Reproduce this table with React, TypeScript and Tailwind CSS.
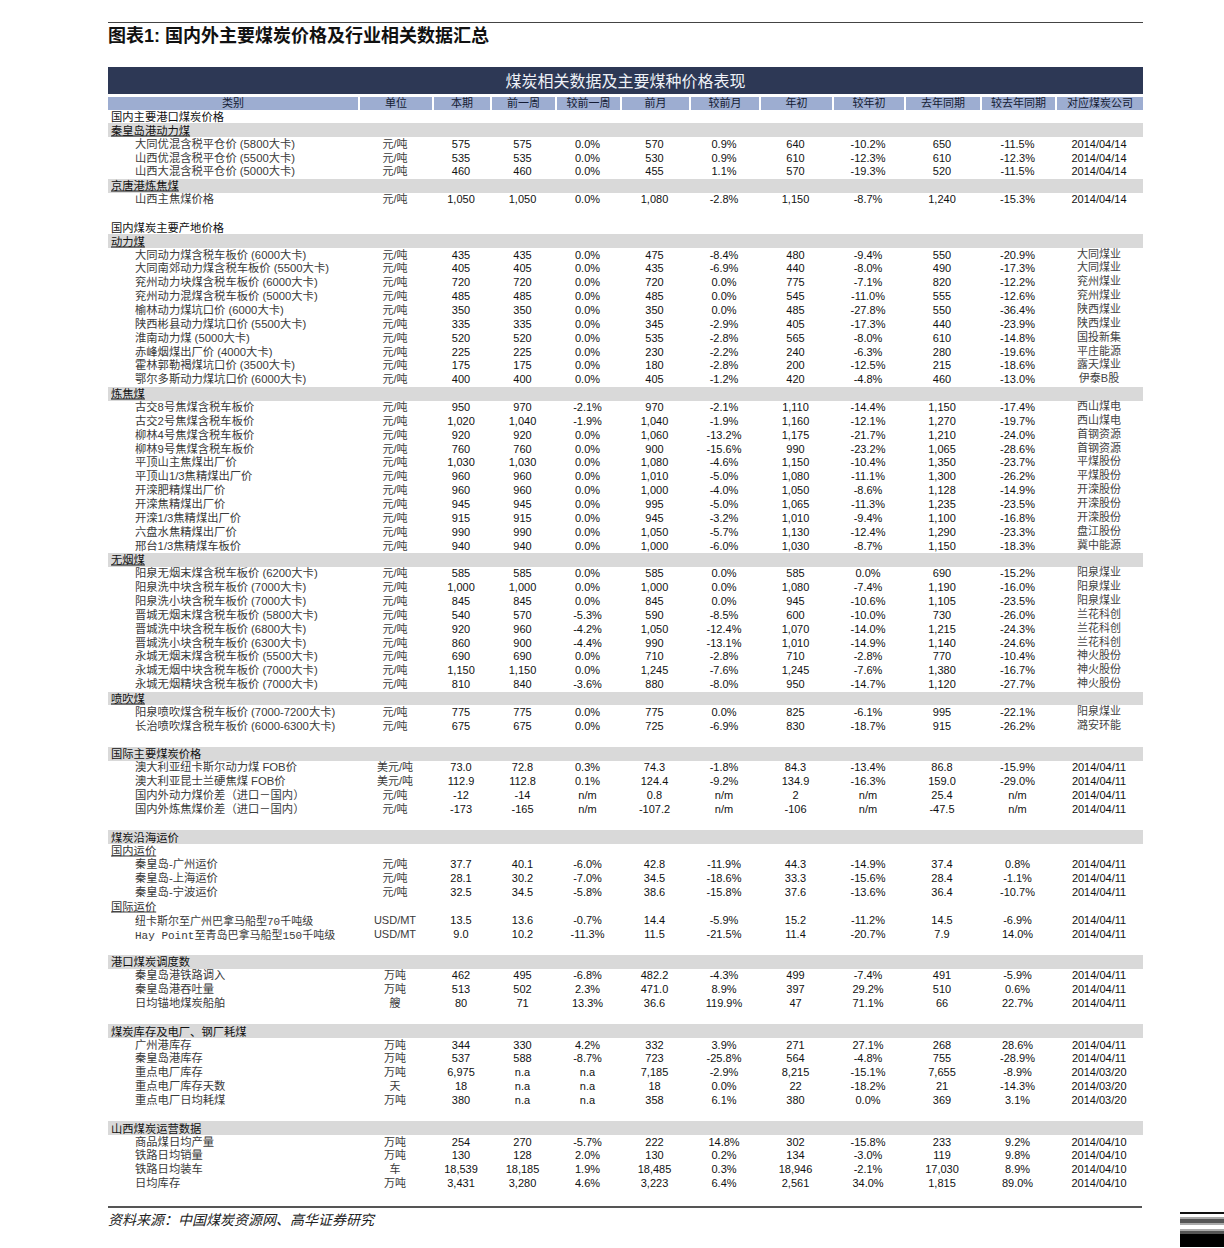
const COLS =
  'grid grid-cols-[250px_74px_58px_65px_65px_69px_70px_73px_72px_76px_75px_88px]';

const HEAD = ['类别', '单位', '本期', '前一周', '较前一周', '前月', '较前月', '年初', '较年初', '去年同期', '较去年同期', '对应煤炭公司'];

// "!h" plain header, "!g" grey band, "!gu" grey band underlined, "!u" underlined, "!b" blank
const DATA: string[] = [
  '!h 国内主要港口煤炭价格',
  '!gu 秦皇岛港动力煤',
  '大同优混含税平仓价 (5800大卡)|元/吨|575|575|0.0%|570|0.9%|640|-10.2%|650|-11.5%|2014/04/14',
  '山西优混含税平仓价 (5500大卡)|元/吨|535|535|0.0%|530|0.9%|610|-12.3%|610|-12.3%|2014/04/14',
  '山西大混含税平仓价 (5000大卡)|元/吨|460|460|0.0%|455|1.1%|570|-19.3%|520|-11.5%|2014/04/14',
  '!gu 京唐港炼焦煤',
  '山西主焦煤价格|元/吨|1,050|1,050|0.0%|1,080|-2.8%|1,150|-8.7%|1,240|-15.3%|2014/04/14',
  '!b',
  '!h 国内煤炭主要产地价格',
  '!gu 动力煤',
  '大同动力煤含税车板价 (6000大卡)|元/吨|435|435|0.0%|475|-8.4%|480|-9.4%|550|-20.9%|大同煤业',
  '大同南郊动力煤含税车板价 (5500大卡)|元/吨|405|405|0.0%|435|-6.9%|440|-8.0%|490|-17.3%|大同煤业',
  '兖州动力块煤含税车板价 (6000大卡)|元/吨|720|720|0.0%|720|0.0%|775|-7.1%|820|-12.2%|兖州煤业',
  '兖州动力混煤含税车板价 (5000大卡)|元/吨|485|485|0.0%|485|0.0%|545|-11.0%|555|-12.6%|兖州煤业',
  '榆林动力煤坑口价 (6000大卡)|元/吨|350|350|0.0%|350|0.0%|485|-27.8%|550|-36.4%|陕西煤业',
  '陕西彬县动力煤坑口价 (5500大卡)|元/吨|335|335|0.0%|345|-2.9%|405|-17.3%|440|-23.9%|陕西煤业',
  '淮南动力煤 (5000大卡)|元/吨|520|520|0.0%|535|-2.8%|565|-8.0%|610|-14.8%|国投新集',
  '赤峰烟煤出厂价 (4000大卡)|元/吨|225|225|0.0%|230|-2.2%|240|-6.3%|280|-19.6%|平庄能源',
  '霍林郭勒褐煤坑口价 (3500大卡)|元/吨|175|175|0.0%|180|-2.8%|200|-12.5%|215|-18.6%|露天煤业',
  '鄂尔多斯动力煤坑口价 (6000大卡)|元/吨|400|400|0.0%|405|-1.2%|420|-4.8%|460|-13.0%|伊泰B股',
  '!gu 炼焦煤',
  '古交8号焦煤含税车板价|元/吨|950|970|-2.1%|970|-2.1%|1,110|-14.4%|1,150|-17.4%|西山煤电',
  '古交2号焦煤含税车板价|元/吨|1,020|1,040|-1.9%|1,040|-1.9%|1,160|-12.1%|1,270|-19.7%|西山煤电',
  '柳林4号焦煤含税车板价|元/吨|920|920|0.0%|1,060|-13.2%|1,175|-21.7%|1,210|-24.0%|首钢资源',
  '柳林9号焦煤含税车板价|元/吨|760|760|0.0%|900|-15.6%|990|-23.2%|1,065|-28.6%|首钢资源',
  '平顶山主焦煤出厂价|元/吨|1,030|1,030|0.0%|1,080|-4.6%|1,150|-10.4%|1,350|-23.7%|平煤股份',
  '平顶山1/3焦精煤出厂价|元/吨|960|960|0.0%|1,010|-5.0%|1,080|-11.1%|1,300|-26.2%|平煤股份',
  '开滦肥精煤出厂价|元/吨|960|960|0.0%|1,000|-4.0%|1,050|-8.6%|1,128|-14.9%|开滦股份',
  '开滦焦精煤出厂价|元/吨|945|945|0.0%|995|-5.0%|1,065|-11.3%|1,235|-23.5%|开滦股份',
  '开滦1/3焦精煤出厂价|元/吨|915|915|0.0%|945|-3.2%|1,010|-9.4%|1,100|-16.8%|开滦股份',
  '六盘水焦精煤出厂价|元/吨|990|990|0.0%|1,050|-5.7%|1,130|-12.4%|1,290|-23.3%|盘江股份',
  '邢台1/3焦精煤车板价|元/吨|940|940|0.0%|1,000|-6.0%|1,030|-8.7%|1,150|-18.3%|冀中能源',
  '!gu 无烟煤',
  '阳泉无烟末煤含税车板价 (6200大卡)|元/吨|585|585|0.0%|585|0.0%|585|0.0%|690|-15.2%|阳泉煤业',
  '阳泉洗中块含税车板价 (7000大卡)|元/吨|1,000|1,000|0.0%|1,000|0.0%|1,080|-7.4%|1,190|-16.0%|阳泉煤业',
  '阳泉洗小块含税车板价 (7000大卡)|元/吨|845|845|0.0%|845|0.0%|945|-10.6%|1,105|-23.5%|阳泉煤业',
  '晋城无烟末煤含税车板价 (5800大卡)|元/吨|540|570|-5.3%|590|-8.5%|600|-10.0%|730|-26.0%|兰花科创',
  '晋城洗中块含税车板价 (6800大卡)|元/吨|920|960|-4.2%|1,050|-12.4%|1,070|-14.0%|1,215|-24.3%|兰花科创',
  '晋城洗小块含税车板价 (6300大卡)|元/吨|860|900|-4.4%|990|-13.1%|1,010|-14.9%|1,140|-24.6%|兰花科创',
  '永城无烟末煤含税车板价 (5500大卡)|元/吨|690|690|0.0%|710|-2.8%|710|-2.8%|770|-10.4%|神火股份',
  '永城无烟中块含税车板价 (7000大卡)|元/吨|1,150|1,150|0.0%|1,245|-7.6%|1,245|-7.6%|1,380|-16.7%|神火股份',
  '永城无烟精块含税车板价 (7000大卡)|元/吨|810|840|-3.6%|880|-8.0%|950|-14.7%|1,120|-27.7%|神火股份',
  '!gu 喷吹煤',
  '阳泉喷吹煤含税车板价 (7000-7200大卡)|元/吨|775|775|0.0%|775|0.0%|825|-6.1%|995|-22.1%|阳泉煤业',
  '长治喷吹煤含税车板价 (6000-6300大卡)|元/吨|675|675|0.0%|725|-6.9%|830|-18.7%|915|-26.2%|潞安环能',
  '!b',
  '!g 国际主要煤炭价格',
  '澳大利亚纽卡斯尔动力煤 FOB价|美元/吨|73.0|72.8|0.3%|74.3|-1.8%|84.3|-13.4%|86.8|-15.9%|2014/04/11',
  '澳大利亚昆士兰硬焦煤 FOB价|美元/吨|112.9|112.8|0.1%|124.4|-9.2%|134.9|-16.3%|159.0|-29.0%|2014/04/11',
  '国内外动力煤价差（进口－国内）|元/吨|-12|-14|n/m|0.8|n/m|2|n/m|25.4|n/m|2014/04/11',
  '国内外炼焦煤价差（进口－国内）|元/吨|-173|-165|n/m|-107.2|n/m|-106|n/m|-47.5|n/m|2014/04/11',
  '!b',
  '!g 煤炭沿海运价',
  '!u 国内运价',
  '秦皇岛-广州运价|元/吨|37.7|40.1|-6.0%|42.8|-11.9%|44.3|-14.9%|37.4|0.8%|2014/04/11',
  '秦皇岛-上海运价|元/吨|28.1|30.2|-7.0%|34.5|-18.6%|33.3|-15.6%|28.4|-1.1%|2014/04/11',
  '秦皇岛-宁波运价|元/吨|32.5|34.5|-5.8%|38.6|-15.8%|37.6|-13.6%|36.4|-10.7%|2014/04/11',
  '!u 国际运价',
  '~纽卡斯尔至广州巴拿马船型70千吨级|USD/MT|13.5|13.6|-0.7%|14.4|-5.9%|15.2|-11.2%|14.5|-6.9%|2014/04/11',
  '~Hay Point至青岛巴拿马船型150千吨级|USD/MT|9.0|10.2|-11.3%|11.5|-21.5%|11.4|-20.7%|7.9|14.0%|2014/04/11',
  '!b',
  '!g 港口煤炭调度数',
  '秦皇岛港铁路调入|万吨|462|495|-6.8%|482.2|-4.3%|499|-7.4%|491|-5.9%|2014/04/11',
  '秦皇岛港吞吐量|万吨|513|502|2.3%|471.0|8.9%|397|29.2%|510|0.6%|2014/04/11',
  '日均锚地煤炭船舶|艘|80|71|13.3%|36.6|119.9%|47|71.1%|66|22.7%|2014/04/11',
  '!b',
  '!g 煤炭库存及电厂、钢厂耗煤',
  '广州港库存|万吨|344|330|4.2%|332|3.9%|271|27.1%|268|28.6%|2014/04/11',
  '秦皇岛港库存|万吨|537|588|-8.7%|723|-25.8%|564|-4.8%|755|-28.9%|2014/04/11',
  '重点电厂库存|万吨|6,975|n.a|n.a|7,185|-2.9%|8,215|-15.1%|7,655|-8.9%|2014/03/20',
  '重点电厂库存天数|天|18|n.a|n.a|18|0.0%|22|-18.2%|21|-14.3%|2014/03/20',
  '重点电厂日均耗煤|万吨|380|n.a|n.a|358|6.1%|380|0.0%|369|3.1%|2014/03/20',
  '!b',
  '!g 山西煤炭运营数据',
  '商品煤日均产量|万吨|254|270|-5.7%|222|14.8%|302|-15.8%|233|9.2%|2014/04/10',
  '铁路日均销量|万吨|130|128|2.0%|130|0.2%|134|-3.0%|119|9.8%|2014/04/10',
  '铁路日均装车|车|18,539|18,185|1.9%|18,485|0.3%|18,946|-2.1%|17,030|8.9%|2014/04/10',
  '日均库存|万吨|3,431|3,280|4.6%|3,223|6.4%|2,561|34.0%|1,815|89.0%|2014/04/10',
];

const SANS = "font-['Liberation_Sans','Noto_Sans_CJK_SC',sans-serif]";

function TableRow({ line }: { line: string }) {
  if (line.startsWith('!')) {
    const sp = line.indexOf(' ');
    const kind = sp < 0 ? line.slice(1) : line.slice(1, sp);
    const text = sp < 0 ? '' : line.slice(sp + 1);
    if (kind === 'b') return <div className="h-[13.87px]" />;
    const grey = kind === 'g' || kind === 'gu';
    const under = kind === 'gu' || kind === 'u';
    return (
      <div className={`h-[13.87px] flex items-center pl-[3px] ${grey ? 'bg-[#d9d9d9]' : ''}`}>
        <span
          className={`text-[11.3px] leading-[13px] translate-y-[0.5px] ${kind === 'u' ? 'text-[#333]' : 'text-[#111]'} ${
            under ? 'underline decoration-1 underline-offset-[1px]' : ''
          }`}
        >
          {text}
        </span>
      </div>
    );
  }

  const mono = line.startsWith('~');
  const cells = (mono ? line.slice(1) : line).split('|');
  const last = cells[11];
  const isDate = /^\d/.test(last);

  return (
    <div className={`${COLS} h-[13.87px] items-center text-[11px] leading-[13px] text-[#111]`}>
      <div
        className={`pl-[27px] whitespace-nowrap text-[#3a3a3a] ${
          mono
            ? "font-['Liberation_Mono','Noto_Sans_CJK_SC',monospace] text-[11px] translate-y-[1.5px]"
            : 'text-[11.3px]'
        }`}
      >
        {cells[0]}
      </div>
      <div className="text-center text-[#3a3a3a]">{cells[1]}</div>
      {cells.slice(2, 11).map((v, i) => (
        <div key={i} className="text-center">
          {v}
        </div>
      ))}
      <div className={`text-center ${isDate ? '' : 'text-[#444] -translate-y-[1px]'}`}>{last}</div>
    </div>
  );
}

export default function App() {
  return (
    <div className={`w-[1224px] h-[1248px] overflow-hidden bg-white ${SANS}`}>
      <div className="pt-[22px] pl-[108px] w-[1143px]">
        <div className="h-px bg-[#444]" />
        <div className="h-[44px] leading-[26px] text-[18px] font-bold text-[#111]">
          图表1: 国内外主要煤炭价格及行业相关数据汇总
        </div>

        <div className="h-[27px] bg-[#2d3855] flex items-center justify-center text-[16px] text-[#eef1f7] pt-[3px]">
          煤炭相关数据及主要煤种价格表现
        </div>

        <div className={`${COLS} mt-[2.5px] h-[13px] text-[11px] leading-[13px] text-[#141b33]`}>
          {HEAD.map((h, i) => (
            <div
              key={h}
              className={`bg-[#9dadd1] text-center ${i > 0 ? 'border-l-2 border-white' : ''}`}
            >
              {h}
            </div>
          ))}
        </div>

        <div>
          {DATA.map((line, i) => (
            <TableRow key={i} line={line} />
          ))}
        </div>

        <div className="mt-[15.6px] h-[2px] bg-[#555] w-[1034px]" />
      </div>

      <div className="mt-[4px] flex justify-between">
        <div className="ml-[108px] text-[14px] leading-[16px] italic text-[#222]">
          资料来源：中国煤炭资源网、高华证券研究
        </div>
        <div className="w-[44px] h-[35px] flex flex-col">
          <div className="h-[2px] bg-[#111]" />
          <div className="h-[2.5px]" />
          <div className="h-[2px] bg-[#aaa]" />
          <div className="h-[4px] bg-[#555]" />
          <div className="h-[2px] bg-[#aaa]" />
          <div className="h-[4px]" />
          <div className="h-[2px] bg-[#aaa]" />
          <div className="h-[3px] bg-[#555]" />
          <div className="flex-1 bg-black" />
        </div>
      </div>
    </div>
  );
}
